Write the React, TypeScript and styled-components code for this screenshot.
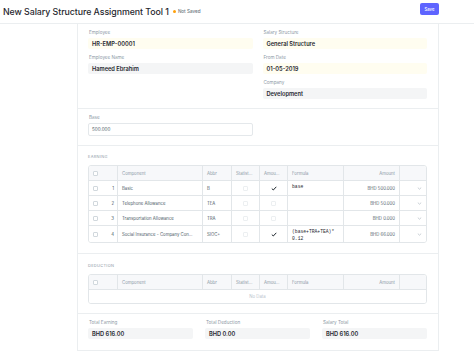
import React from "react";
import styled, { createGlobalStyle } from "styled-components";

type EarningRow = {
  idx: number;
  component: string;
  abbr: string;
  dependsOnBase: boolean;
  formula: string[];
  amount: string;
};

const earnings: EarningRow[] = [
  { idx: 1, component: "Basic", abbr: "B", dependsOnBase: true, formula: ["base"], amount: "BHD 500.000" },
  { idx: 2, component: "Telephone Allowance", abbr: "TEA", dependsOnBase: false, formula: [], amount: "BHD 50.000" },
  { idx: 3, component: "Transportation Allowance", abbr: "TRA", dependsOnBase: false, formula: [], amount: "BHD 0.000" },
  {
    idx: 4,
    component: "Social Insurance - Company Con...",
    abbr: "SIOC+",
    dependsOnBase: true,
    formula: ["(base+TRA+TEA)*", "0.12"],
    amount: "BHD 66.000",
  },
];

const GlobalStyle = createGlobalStyle`
  html, body {
    margin: 0;
    padding: 0;
    background: #ffffff;
  }
  body {
    font-family: Inter, "Liberation Sans", sans-serif;
    color: #36414c;
  }
  * {
    box-sizing: border-box;
  }
`;

const Page = styled.div`
  width: 474px;
  height: 364px;
  overflow: hidden;
`;

const PageHead = styled.header`
  height: 24px;
  border-bottom: 1px solid #ebeef0;
`;

const HeadInner = styled.div`
  width: 439px;
  height: 23px;
  padding-left: 3px;
  display: flex;
  align-items: center;
`;

const Title = styled.h1`
  margin: 0;
  font-size: 8.8px;
  font-weight: 500;
  letter-spacing: -0.05px;
  color: #1f272e;
  white-space: nowrap;
`;

const Indicator = styled.span`
  display: flex;
  align-items: center;
  gap: 2px;
  margin-left: 4px;
  font-size: 4.6px;
  font-weight: 500;
  color: #6c7680;

  &::before {
    content: "";
    width: 3px;
    height: 3px;
    border-radius: 50%;
    background: #ffa00a;
  }
`;

const SaveButton = styled.button`
  margin-left: auto;
  align-self: flex-start;
  margin-top: 3px;
  width: 19px;
  height: 12px;
  padding: 0;
  border: none;
  border-radius: 2px;
  background: #5e64ff;
  color: #ffffff;
  font-family: inherit;
  font-size: 4.2px;
  font-weight: 500;
`;

const Layout = styled.div`
  display: flex;
  width: 439px;
`;

const Sidebar = styled.aside`
  width: 77px;
  flex: none;
`;

const FormCard = styled.main`
  width: 362px;
  border: 1px solid #ebeef0;
  border-top: none;
`;

const Section = styled.section<{ $top: number; $bottom: number }>`
  padding: ${(p) => p.$top}px 11px ${(p) => p.$bottom}px 10px;
  border-bottom: 1px solid #ebeef0;

  &:last-child {
    border-bottom: none;
  }
`;

const Columns = styled.div<{ $count: number; $gap: number }>`
  display: grid;
  grid-template-columns: repeat(${(p) => p.$count}, 1fr);
  column-gap: ${(p) => p.$gap}px;
  align-items: start;
`;

const Field = styled.div`
  margin-bottom: 5px;
`;

const Label = styled.div`
  height: 7px;
  line-height: 7px;
  margin-bottom: 2px;
  padding-left: 1px;
  font-size: 4.6px;
  color: #8d99a6;
  white-space: nowrap;
`;

type Tone = "mandatory" | "readonly" | "plain";

const Value = styled.div<{ $tone: Tone; $height?: number }>`
  height: ${(p) => p.$height ?? 11}px;
  display: flex;
  align-items: center;
  padding: 0 3px;
  border-radius: 2px;
  font-size: ${(p) => (p.$tone === "plain" ? 4.6 : 5.7)}px;
  font-weight: ${(p) => (p.$tone === "plain" ? 400 : 600)};
  color: ${(p) => (p.$tone === "plain" ? "#4c5a67" : "#1f272e")};
  background: ${(p) =>
    p.$tone === "mandatory" ? "#fffdf0" : p.$tone === "readonly" ? "#f4f5f6" : "#ffffff"};
  border: 1px solid ${(p) => (p.$tone === "plain" ? "#e4e8eb" : "transparent")};
  white-space: nowrap;
`;

const SectionHeading = styled.div`
  height: 7px;
  line-height: 7px;
  margin-bottom: 5px;
  font-size: 3.9px;
  letter-spacing: 0.35px;
  text-transform: uppercase;
  color: #8d99a6;
`;

const Grid = styled.div`
  border: 1px solid #e2e6e9;
  border-radius: 3px;
  overflow: hidden;
`;

const GridRow = styled.div<{ $head?: boolean; $height?: number }>`
  display: grid;
  grid-template-columns: 28px 85px 29px 28px 28px 56px 56px 27px;
  grid-template-rows: 100%;
  height: ${(p) => p.$height ?? 15}px;
  overflow: hidden;
  border-top: 1px solid #e2e6e9;
  background: ${(p) => (p.$head ? "#f7f8fa" : "#ffffff")};
  font-size: 4.3px;
  line-height: 5px;
  color: ${(p) => (p.$head ? "#8d99a6" : "#4c5a67")};

  &:first-child {
    border-top: none;
  }
`;

const Cell = styled.div<{ $justify?: "flex-start" | "center" | "flex-end"; $top?: boolean }>`
  display: flex;
  align-items: ${(p) => (p.$top ? "flex-start" : "center")};
  justify-content: ${(p) => p.$justify ?? "flex-start"};
  min-width: 0;
  min-height: 0;
  padding: ${(p) => (p.$top ? "2px 4px 0" : "0 4px")};
  border-left: 1px solid #e2e6e9;
  overflow: hidden;
  white-space: nowrap;

  &:first-child {
    border-left: none;
  }
`;

const IndexCell = styled(Cell)`
  justify-content: space-between;
  padding: 0 3px 0 4px;
`;

const Mono = styled.div`
  font-family: "Liberation Mono", "DejaVu Sans Mono", monospace;
  font-size: 4.7px;
  line-height: 7px;
  color: #1f272e;
  white-space: nowrap;
`;

const Box = styled.span<{ $faint?: boolean }>`
  width: 5px;
  height: 5px;
  flex: none;
  border: 0.6px solid ${(p) => (p.$faint ? "#eceff1" : "#d1d8dd")};
  border-radius: 1px;
  background: #ffffff;
`;

const EmptyRow = styled.div`
  grid-column: 1 / -1;
  display: flex;
  align-items: center;
  justify-content: center;
  color: #b8c2cc;
`;

const Check = () => (
  <svg width="6" height="5" viewBox="0 0 6 5">
    <path d="M0.8 2.6 L2.3 4 L5.3 0.8" fill="none" stroke="#1f272e" strokeWidth="1" />
  </svg>
);

const Chevron = () => (
  <svg width="5" height="3" viewBox="0 0 5 3">
    <path d="M0.8 0.6 L2.5 2.2 L4.2 0.6" fill="none" stroke="#a6b0ba" strokeWidth="0.6" />
  </svg>
);

const GridHead = () => (
  <GridRow $head $height={14}>
    <Cell>
      <Box />
    </Cell>
    <Cell>Component</Cell>
    <Cell>Abbr</Cell>
    <Cell>Statist...</Cell>
    <Cell>Amou...</Cell>
    <Cell>Formula</Cell>
    <Cell $justify="flex-end">Amount</Cell>
    <Cell />
  </GridRow>
);

const App: React.FC = () => {
  return (
    <Page>
      <GlobalStyle />
      <PageHead>
        <HeadInner>
          <Title>New Salary Structure Assignment Tool 1</Title>
          <Indicator>Not Saved</Indicator>
          <SaveButton>Save</SaveButton>
        </HeadInner>
      </PageHead>
      <Layout>
        <Sidebar />
        <FormCard>
          <Section $top={5} $bottom={4}>
            <Columns $count={2} $gap={10}>
              <div>
                <Field>
                  <Label>Employee</Label>
                  <Value $tone="mandatory">HR-EMP-00001</Value>
                </Field>
                <Field>
                  <Label>Employee Name</Label>
                  <Value $tone="readonly">Hameed Ebrahim</Value>
                </Field>
              </div>
              <div>
                <Field>
                  <Label>Salary Structure</Label>
                  <Value $tone="mandatory">General Structure</Value>
                </Field>
                <Field>
                  <Label>From Date</Label>
                  <Value $tone="mandatory">01-05-2019</Value>
                </Field>
                <Field>
                  <Label>Company</Label>
                  <Value $tone="readonly">Development</Value>
                </Field>
              </div>
            </Columns>
          </Section>

          <Section $top={5} $bottom={4}>
            <Columns $count={2} $gap={10}>
              <Field>
                <Label>Base</Label>
                <Value $tone="plain" $height={13}>
                  500.000
                </Value>
              </Field>
            </Columns>
          </Section>

          <Section $top={7} $bottom={10}>
            <SectionHeading>Earning</SectionHeading>
            <Grid>
              <GridHead />
              {earnings.map((row) => (
                <GridRow key={row.idx} $height={row.formula.length > 1 ? 17 : 15}>
                  <IndexCell>
                    <Box />
                    <span>{row.idx}</span>
                  </IndexCell>
                  <Cell>{row.component}</Cell>
                  <Cell>{row.abbr}</Cell>
                  <Cell $justify="center">
                    <Box $faint />
                  </Cell>
                  <Cell $justify="center">{row.dependsOnBase ? <Check /> : <Box $faint />}</Cell>
                  <Cell $top>
                    <div>
                      {row.formula.map((line) => (
                        <Mono key={line}>{line}</Mono>
                      ))}
                    </div>
                  </Cell>
                  <Cell $justify="flex-end">{row.amount}</Cell>
                  <Cell $justify="flex-end">
                    <Chevron />
                  </Cell>
                </GridRow>
              ))}
            </Grid>
          </Section>

          <Section $top={8} $bottom={9}>
            <SectionHeading>Deduction</SectionHeading>
            <Grid>
              <GridHead />
              <GridRow $height={14}>
                <EmptyRow>No Data</EmptyRow>
              </GridRow>
            </Grid>
          </Section>

          <Section $top={5} $bottom={6}>
            <Columns $count={3} $gap={12}>
              <Field>
                <Label>Total Earning</Label>
                <Value $tone="readonly">BHD 616.00</Value>
              </Field>
              <Field>
                <Label>Total Deduction</Label>
                <Value $tone="readonly">BHD 0.00</Value>
              </Field>
              <Field>
                <Label>Salary Total</Label>
                <Value $tone="readonly">BHD 616.00</Value>
              </Field>
            </Columns>
          </Section>
        </FormCard>
      </Layout>
    </Page>
  );
};

export default App;
